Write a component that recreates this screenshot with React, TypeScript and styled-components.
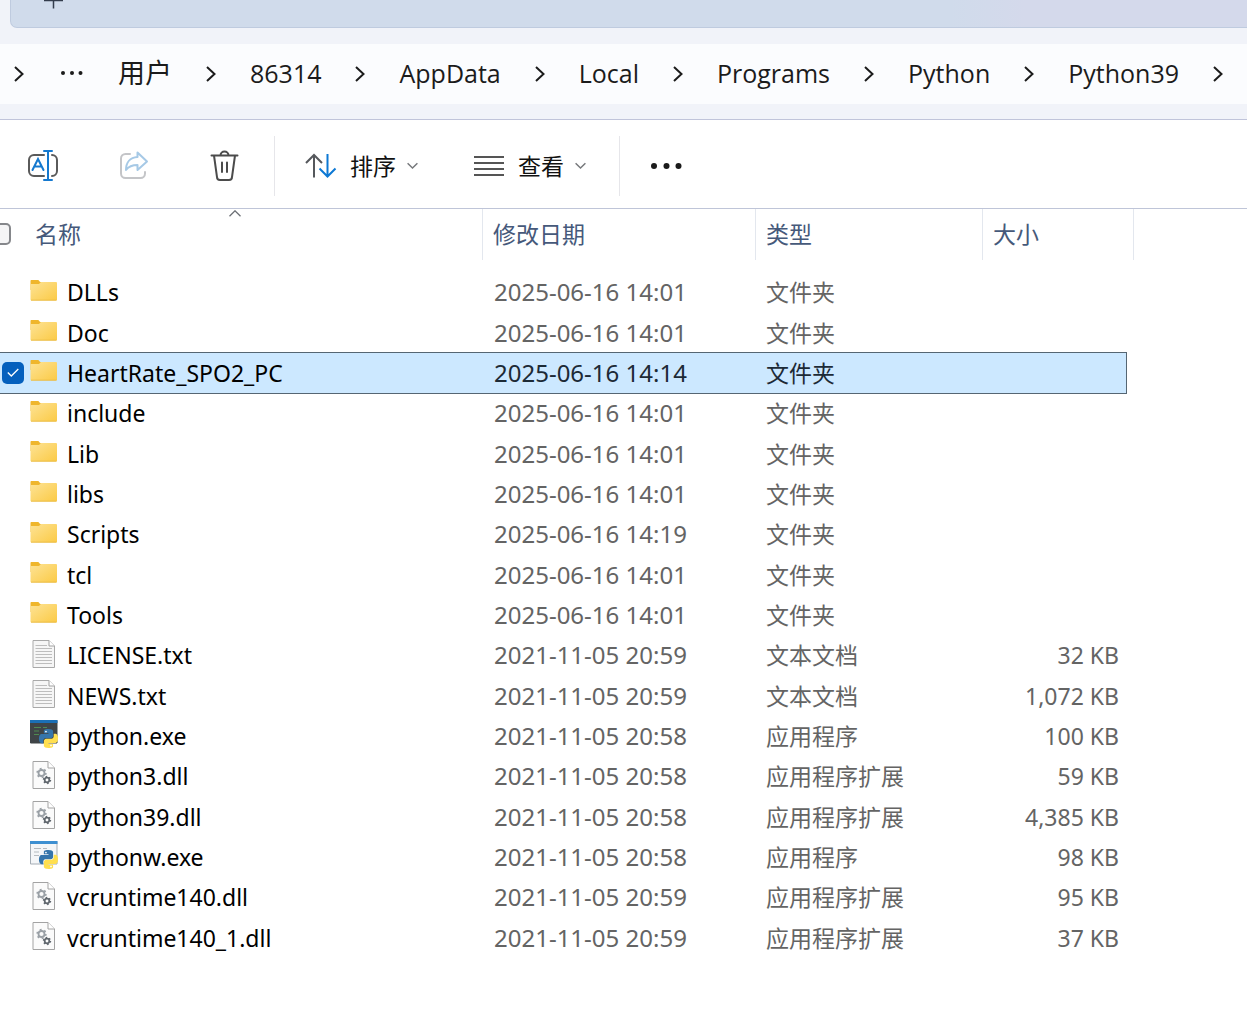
import React from "react";
import styled, { createGlobalStyle } from "styled-components";

const sans = `"Noto Sans", "Noto Sans CJK SC", sans-serif`;

const GlobalStyle = createGlobalStyle`
  * { box-sizing: border-box; }
  body { margin: 0; background: #fff; font-family: ${sans}; color: #111; overflow-x: hidden; }
  button { font: inherit; color: inherit; background: none; border: 0; padding: 0; margin: 0; cursor: pointer; }
  svg { display: block; flex: none; }
`;

const Window = styled.div`
  display: flex;
  flex-direction: column;
  min-height: 100vh;
  overflow: hidden;
`;

const Chrome = styled.header`
  background: #f1f3f9;
  border-bottom: 1px solid #c0c4da;
`;

const TabStrip = styled.div`
  height: 28px;
  margin-left: 10px;
  padding-left: 33px;
  background: linear-gradient(90deg, #d0dbeb 76%, #d4d9eb 82%);
  border: solid #bfcbdf;
  border-width: 0 0 1px 1px;
  border-bottom-left-radius: 7px;
`;

const AddressBar = styled.nav`
  display: flex;
  align-items: center;
  gap: 34px;
  height: 60px;
  margin: 16px 0 15px;
  padding-left: 14px;
  background: #fbfcfe;
  line-height: 34px;
  white-space: nowrap;
`;

const Crumb = styled.a<{ $cjk?: boolean }>`
  color: #1b1b1b;
  text-decoration: none;
  font-family: "Open Sans", ${sans};
  font-size: ${(p) => (p.$cjk ? 27 : 25)}px;
  padding-bottom: 2px;
`;

const Toolbar = styled.div`
  display: flex;
  align-items: center;
  height: 89px;
  padding: 4px 27px 0;
  border-bottom: 1px solid #bfc5d8;
  font-size: 23px;
  line-height: 32px;
`;

const IconGroup = styled.div`
  display: flex;
  gap: 59px;
`;

const ToolButton = styled.button`
  display: flex;
  align-items: center;
  white-space: nowrap;
`;

const ToolLabel = styled.span`
  margin: 0 11px 0 13px;
`;

const Divider = styled.span`
  width: 1px;
  height: 60px;
  margin: 0 30px 0 33px;
  background: #e6e6ea;
`;

const MenuGroup = styled.div`
  display: flex;
  gap: 55px;
`;

const FileTable = styled.table`
  width: 1126px;
  table-layout: fixed;
  border-spacing: 0;
  font-size: 23px;
  line-height: 32px;
`;

const Head = styled.th`
  height: 63px;
  padding: 0 0 12px;
  text-align: left;
  font-weight: 400;
  color: #46597a;
`;

const HeadInner = styled.div<{ $wide?: boolean }>`
  position: relative;
  display: flex;
  align-items: center;
  height: 51px;
  padding: 0 0 2px 10px;
  margin-right: ${(p) => (p.$wide ? -8 : 0)}px;
  border-right: 1px solid #e3e7ee;
`;

const NameHead = styled(HeadInner)`
  padding-left: 0;
  gap: 24px;
`;

const SortMark = styled.span`
  position: absolute;
  left: 229px;
  top: 1px;
`;

const CheckBox = styled.input`
  appearance: none;
  flex: none;
  width: 22px;
  height: 22px;
  margin: 0;
  border: 2px solid #85878b;
  border-radius: 5px;
  background: #f5f5f6;
`;

const HeadCheck = styled(CheckBox)`
  margin-left: -11px;
`;

const RowCheck = styled(CheckBox)`
  grid-area: 1 / 1;
  opacity: 0;
  &:checked {
    opacity: 1;
    border: 0;
    background: #0560bd;
  }
`;

const CheckSlot = styled.span`
  display: grid;
  place-items: center;
  margin-right: 6px;
  svg { grid-area: 1 / 1; z-index: 1; pointer-events: none; }
`;

const Body = styled.tbody`
  height: 686px;
`;

const Cell = styled.td<{ $align?: string }>`
  padding: 0 7px 0 10px;
  text-align: ${(p) => p.$align || "left"};
  color: #646464;
  white-space: nowrap;
`;

const DateCell = styled(Cell)`
  padding-left: 11px;
  font-size: 24px;
`;

const NameCell = styled(Cell)`
  padding: 0 0 0 2px;
  color: #000;
`;

const Row = styled.tr<{ $selected?: boolean }>`
  height: 40px;
  ${(p) =>
    p.$selected &&
    `
    td { background: #cce8ff; box-shadow: 0 -1px #556673, 0 1px #556673; color: #1c2a36; }
    td:first-child { color: #000; }
    td:last-child { box-shadow: 0 -1px #556673, 0 1px #556673, 1px -1px #556673, 1px 1px #556673; }
  `}
`;

const NameLine = styled.div`
  display: flex;
  align-items: center;
`;

const FileIcon = styled.span`
  margin: 0 9px 3px 0;
`;

const FileName = styled.label`
  font-size: 23px;
`;

const Chevron = () => (
  <svg width="10" height="16" viewBox="0 0 10 16" fill="none" stroke="#1b1b1b" strokeWidth="2">
    <path d="M1 1l7.5 7L1 15" />
  </svg>
);

const DownChevron = () => (
  <svg width="11" height="8" viewBox="0 0 11 8" fill="none" stroke="#77797c" strokeWidth="1.5">
    <path d="M.6 1.2L5.5 6l4.9-4.8" />
  </svg>
);

const RenameIcon = () => (
  <svg width="32" height="32" viewBox="0 0 32 32" fill="none" strokeLinecap="round">
    <path d="M17 5H7a5 5 0 0 0-5 5v11a5 5 0 0 0 5 5h10M25 5a5 5 0 0 1 5 5v11a5 5 0 0 1-5 5" stroke="#5a5a5a" strokeWidth="2" />
    <path d="M5.5 20L11 9l5.500 11M7.400 16.500h7.200M17 1h8M17 30h8M21 1v29" stroke="#1579cf" strokeWidth="2" />
  </svg>
);

const ShareIcon = () => (
  <svg width="32" height="32" viewBox="0 0 32 32" fill="none" strokeWidth="2" strokeLinecap="round" strokeLinejoin="round">
    <path d="M12 4H7.500A4.500 4.500 0 0 0 3 8.500v15A4.500 4.500 0 0 0 7.500 28h15a4.500 4.500 0 0 0 4.500-4.500V22" stroke="#c4c5c8" />
    <path d="M19.500 2.500l9.500 9-9.500 8.500v-5c-5 0-8.500 1-11.500 5C8 12.500 12 7.500 19.500 7z" stroke="#a6c9e6" />
  </svg>
);

const TrashIcon = () => (
  <svg width="32" height="32" viewBox="0 0 32 32" fill="none" stroke="#4b4b4b" strokeWidth="2" strokeLinecap="round">
    <path d="M2.500 5.500h26M11.500 5.500a4 4 0 0 1 8 0M5 5.500l3 21.500A3 3 0 0 0 11 30h9a3 3 0 0 0 3-3L26 5.500M13 12.500v9.500M18 12.500v9.500" />
  </svg>
);

const SortIcon = () => (
  <svg width="32" height="26" viewBox="0 0 32 26" fill="none" strokeWidth="2">
    <path d="M9 24.500V2M1 10l8-8 8 8" stroke="#55585c" />
    <path d="M22.500 1v22.500M14.500 15.500l8 8 8-8" stroke="#0c78d4" />
  </svg>
);

const LinesIcon = () => (
  <svg width="32" height="20" viewBox="0 0 32 20" stroke="#555" strokeWidth="2">
    <path d="M1 1h30M1 7h30M1 13h30M1 19h30" />
  </svg>
);

const Folder = () => (
  <svg width="28" height="28" viewBox="0 0 28 28">
    <defs>
      <linearGradient id="folderFace" x1="0" y1="0" x2="1" y2="1">
        <stop offset="0" stopColor="#fde396" />
        <stop offset="1" stopColor="#fbca45" />
      </linearGradient>
    </defs>
    <path d="M1.500 3H8c1 0 1.500 2 2.500 2H20v8H.500V4c0-.6.4-1 1-1z" fill="#efb62c" />
    <path d="M.5 7h8.500l2-2H26a1 1 0 0 1 1 1v16.500a1 1 0 0 1-1 1H1.500a1 1 0 0 1-1-1z" fill="url(#folderFace)" />
    <path d="M1 23.200h25.500" stroke="#e9b63d" strokeWidth=".8" />
  </svg>
);

const TextDoc = () => (
  <svg width="28" height="28" viewBox="0 0 28 28" fill="none">
    <path d="M3 .5h16l5.500 5.500v21.500H3z" fill="#f6f6f6" stroke="#a9a9a9" />
    <path d="M19 .5V6h5.500" fill="#fff" stroke="#a0a0a0" />
    <path d="M5.500 5.500H17M5.500 8.500h16.500M5.500 11.500h16.500M5.500 14.500h16.500M5.500 17.500h16.500M5.500 20.500h16.500M5.500 23.500h16.500" stroke="#bdbdbd" />
  </svg>
);

const DllDoc = () => (
  <svg width="28" height="28" viewBox="0 0 28 28" fill="none">
    <path d="M3 .5h15l6.500 6.500v20.500H3z" fill="#fbfbfb" stroke="#a3a3a3" />
    <path d="M18 .5V7h6.500" fill="#fff" stroke="#a3a3a3" />
    <circle cx="11.500" cy="12" r="3" stroke="#9aa0a6" strokeWidth="1.800" />
    <circle cx="11.500" cy="12" r="4.400" stroke="#9aa0a6" strokeWidth="1.600" strokeDasharray="1.900 2.708" />
    <circle cx="17" cy="19" r="2.300" stroke="#5f666d" strokeWidth="1.700" />
    <circle cx="17" cy="19" r="3.500" stroke="#5f666d" strokeWidth="1.400" strokeDasharray="1.600 2.065" />
  </svg>
);

const snake =
  "M14.25.18l.9.2.73.26.59.3.45.32.34.34.25.34.16.33.1.3.04.26.02.2-.01.13V8.5l-.05.63-.13.55-.21.46-.26.38-.3.31-.33.25-.35.19-.35.14-.33.1-.3.07-.26.04-.21.02H8.77l-.69.05-.59.14-.5.22-.41.27-.33.32-.27.35-.2.36-.15.37-.1.35-.07.32-.04.27-.02.21v3.06H3.17l-.21-.03-.28-.07-.32-.12-.35-.18-.36-.26-.36-.36-.35-.46-.32-.59-.28-.73-.21-.88-.14-1.05-.05-1.23.06-1.22.16-1.04.24-.87.32-.71.36-.57.4-.44.42-.33.42-.24.4-.16.36-.1.32-.05.24-.01h.16l.06.01h8.16v-.83H6.18l-.01-2.75-.02-.37.05-.34.11-.31.17-.28.25-.26.31-.23.38-.2.44-.18.51-.15.58-.12.64-.1.71-.06.77-.04.84-.02z";

const PythonApp = ({ dark }: { dark?: boolean }) => (
  <svg width="28" height="28" viewBox="0 0 28 28">
    <path d="M.5.500h26.500v22.500H.5z" fill={dark ? "#3f4447" : "#f4f6f8"} stroke={dark ? "#3f4447" : "#a5adb5"} />
    <path d="M0 0h27.500v3H0z" fill={dark ? "#1b6fb5" : "#3d8fd1"} />
    <path d="M4 7.500h7M4 11h5M4 14.500h5M13 7.500h4" stroke={dark ? "#4e8a50" : "#b6bbc0"} strokeWidth="1.200" />
    <g transform="translate(9 9) scale(.79)">
      <path d={snake} fill="#3675ab" />
      <path d={snake} fill="#ffdf4f" transform="rotate(180 12 12)" />
      <circle cx="8.800" cy="3.200" r="1.100" fill="#fff" />
      <circle cx="15.200" cy="20.800" r="1.100" fill="#fff" />
    </g>
  </svg>
);

type Kind = "folder" | "text" | "console" | "windowed" | "dll";

const icons: Record<Kind, React.ReactNode> = {
  folder: <Folder />,
  text: <TextDoc />,
  console: <PythonApp dark />,
  windowed: <PythonApp />,
  dll: <DllDoc />,
};

const types: Record<Kind, string> = {
  folder: "文件夹",
  text: "文本文档",
  console: "应用程序",
  windowed: "应用程序",
  dll: "应用程序扩展",
};

const files: [string, string, Kind, string][] = [
  ["DLLs", "2025-06-16 14:01", "folder", ""],
  ["Doc", "2025-06-16 14:01", "folder", ""],
  ["HeartRate_SPO2_PC", "2025-06-16 14:14", "folder", ""],
  ["include", "2025-06-16 14:01", "folder", ""],
  ["Lib", "2025-06-16 14:01", "folder", ""],
  ["libs", "2025-06-16 14:01", "folder", ""],
  ["Scripts", "2025-06-16 14:19", "folder", ""],
  ["tcl", "2025-06-16 14:01", "folder", ""],
  ["Tools", "2025-06-16 14:01", "folder", ""],
  ["LICENSE.txt", "2021-11-05 20:59", "text", "32 KB"],
  ["NEWS.txt", "2021-11-05 20:59", "text", "1,072 KB"],
  ["python.exe", "2021-11-05 20:58", "console", "100 KB"],
  ["python3.dll", "2021-11-05 20:58", "dll", "59 KB"],
  ["python39.dll", "2021-11-05 20:58", "dll", "4,385 KB"],
  ["pythonw.exe", "2021-11-05 20:58", "windowed", "98 KB"],
  ["vcruntime140.dll", "2021-11-05 20:59", "dll", "95 KB"],
  ["vcruntime140_1.dll", "2021-11-05 20:59", "dll", "37 KB"],
];

const crumbs = ["用户", "86314", "AppData", "Local", "Programs", "Python", "Python39"];

export default function App() {
  const [selected, setSelected] = React.useState("HeartRate_SPO2_PC");
  return (
    <Window>
      <GlobalStyle />
      <Chrome>
        <TabStrip>
          <ToolButton aria-label="新建标签页">
            <svg width="19" height="9" viewBox="0 0 19 9" stroke="#333c4c" strokeWidth="1.500">
              <path d="M0 .5h19M9.500 0v8.500" />
            </svg>
          </ToolButton>
        </TabStrip>
        <AddressBar>
          <Chevron />
          <ToolButton aria-label="更多位置">
            <svg width="26" height="6" viewBox="0 0 26 6" fill="#1b1b1b">
              <circle cx="5" cy="2" r="2" />
              <circle cx="14" cy="2" r="2" />
              <circle cx="22.500" cy="2" r="2" />
            </svg>
          </ToolButton>
          {crumbs.map((name, i) => (
            <React.Fragment key={name}>
              <Crumb href="#" $cjk={i === 0}>{name}</Crumb>
              <Chevron />
            </React.Fragment>
          ))}
        </AddressBar>
      </Chrome>
      <Toolbar>
        <IconGroup>
          <ToolButton aria-label="重命名"><RenameIcon /></ToolButton>
          <ToolButton aria-label="共享"><ShareIcon /></ToolButton>
          <ToolButton aria-label="删除"><TrashIcon /></ToolButton>
        </IconGroup>
        <Divider />
        <MenuGroup>
          <ToolButton><SortIcon /><ToolLabel>排序</ToolLabel><DownChevron /></ToolButton>
          <ToolButton><LinesIcon /><ToolLabel>查看</ToolLabel><DownChevron /></ToolButton>
        </MenuGroup>
        <Divider />
        <ToolButton aria-label="更多选项">
          <svg width="33" height="8" viewBox="0 0 33 8" fill="#1b1b1b">
            <circle cx="4" cy="4" r="3" />
            <circle cx="16.500" cy="4" r="3" />
            <circle cx="28.500" cy="4" r="3" />
          </svg>
        </ToolButton>
      </Toolbar>
      <FileTable>
        <colgroup>
          <col style={{ width: 483 }} />
          <col style={{ width: 273 }} />
          <col style={{ width: 227 }} />
          <col />
        </colgroup>
        <thead>
          <tr>
            <Head>
              <NameHead>
                <HeadCheck type="checkbox" aria-label="全选" />
                名称
                <SortMark>
                  <svg width="12" height="7" viewBox="0 0 12 7" fill="none" stroke="#6b6f75" strokeWidth="1.300">
                    <path d="M.5 6.300L6 .8l5.500 5.500" />
                  </svg>
                </SortMark>
              </NameHead>
            </Head>
            <Head><HeadInner>修改日期</HeadInner></Head>
            <Head><HeadInner>类型</HeadInner></Head>
            <Head><HeadInner $wide>大小</HeadInner></Head>
          </tr>
        </thead>
        <Body>
          {files.map(([name, date, kind, size]) => {
            const on = name === selected;
            return (
              <Row key={name} $selected={on}>
                <NameCell>
                  <NameLine>
                    <CheckSlot>
                      <RowCheck type="checkbox" id={name} checked={on} onChange={() => setSelected(on ? "" : name)} />
                      {on && (
                        <svg width="12" height="9" viewBox="0 0 12 9" fill="none" stroke="#fff" strokeWidth="1.300">
                          <path d="M.8 4.500L4.300 8l7-7" />
                        </svg>
                      )}
                    </CheckSlot>
                    <FileIcon>{icons[kind]}</FileIcon>
                    <FileName htmlFor={name}>{name}</FileName>
                  </NameLine>
                </NameCell>
                <DateCell>{date}</DateCell>
                <Cell>{types[kind]}</Cell>
                <Cell $align="right">{size}</Cell>
              </Row>
            );
          })}
        </Body>
      </FileTable>
    </Window>
  );
}
